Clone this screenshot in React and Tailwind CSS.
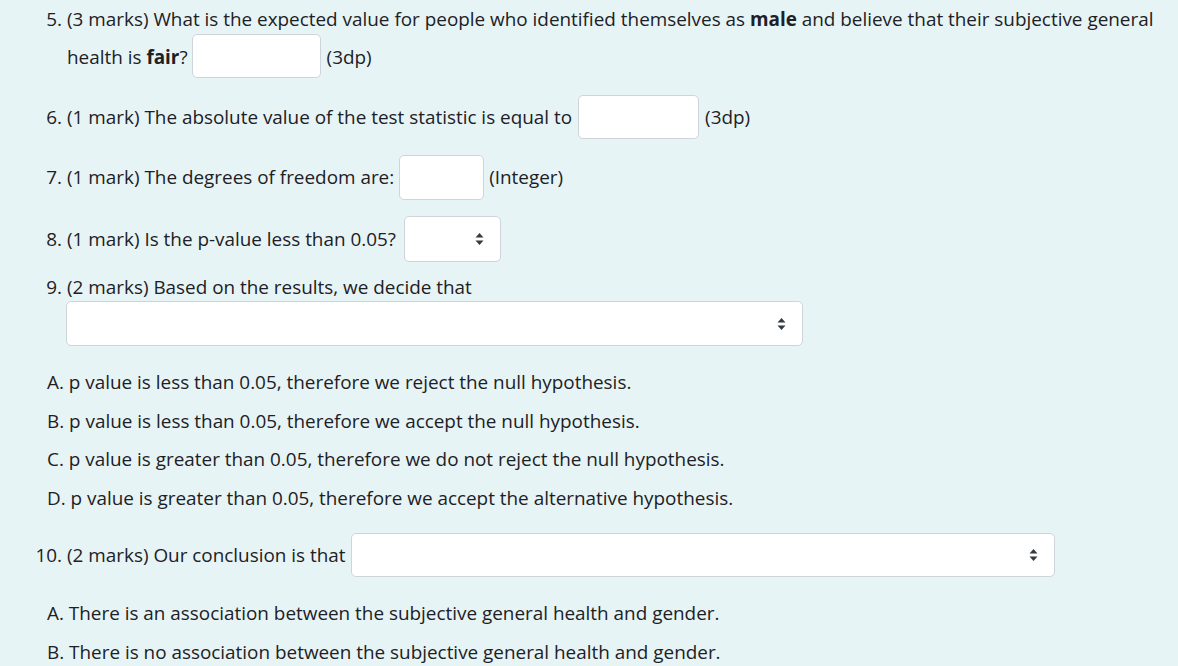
import React from "react";

function Arrows() {
  return (
    <svg width="9" height="14" viewBox="0 0 9 14" className="shrink-0">
      <path d="M4.5 1 L8.5 5.5 L0.5 5.5 Z" fill="#343a40" />
      <path d="M4.5 13 L8.5 8.5 L0.5 8.5 Z" fill="#343a40" />
    </svg>
  );
}

function Box({ className }) {
  return (
    <div
      className={`bg-white border border-[#ced4da] rounded-[5px] shrink-0 ${className}`}
    />
  );
}

function Select({ className }) {
  return (
    <div
      className={`bg-white border border-[#ced4da] rounded-[5px] shrink-0 flex items-center justify-end pr-[16px] ${className}`}
    >
      <Arrows />
    </div>
  );
}

function Num({ children }) {
  return (
    <span className="w-[35px] shrink-0 text-right pr-[5px]">{children}</span>
  );
}

function Option({ children }) {
  return <div className="h-[38.5px] flex items-center pl-[47px]">{children}</div>;
}

export default function App() {
  return (
    <div
      className="w-[1178px] h-[666px] overflow-hidden bg-[#e7f4f6] text-[#1d2125] text-[18.9px] pl-[32px]"
      style={{ fontFamily: '"Open Sans", "Noto Sans", sans-serif' }}
    >
      {/* question 5 */}
      <div className="pt-[5px]">
        <div className="h-[28px] flex items-center whitespace-nowrap">
          <Num>5.</Num>
          <span>
            (3 marks) What is the expected value for people who identified
            themselves as <b>male</b> and believe that their subjective general
          </span>
        </div>
        <div className="h-[44px] mt-[1px] flex items-center pl-[35px]">
          <span className="pt-[3px]">
            health is <b>fair</b>?
          </span>
          <Box className="w-[129px] h-[44px] ml-[4px]" />
          <span className="ml-[6px] pt-[3px]">(3dp)</span>
        </div>
      </div>

      {/* question 6 */}
      <div className="h-[44px] mt-[17px] flex items-center whitespace-nowrap">
        <Num>6.</Num>
        <span>(1 mark) The absolute value of the test statistic is equal to</span>
        <Box className="w-[121px] h-[44px] ml-[6px]" />
        <span className="ml-[6px]">(3dp)</span>
      </div>

      {/* question 7 */}
      <div className="h-[45px] mt-[16px] flex items-center whitespace-nowrap">
        <Num>7.</Num>
        <span>(1 mark) The degrees of freedom are:</span>
        <Box className="w-[85px] h-[45px] ml-[5px]" />
        <span className="ml-[5px]">(Integer)</span>
      </div>

      {/* question 8 */}
      <div className="h-[46px] mt-[16px] flex items-center whitespace-nowrap">
        <Num>8.</Num>
        <span>(1 mark) Is the p-value less than 0.05?</span>
        <Select className="w-[97px] h-[46px] ml-[8px]" />
      </div>

      {/* question 9 */}
      <div className="h-[26px] mt-[12px] flex items-center whitespace-nowrap">
        <Num>9.</Num>
        <span>(2 marks) Based on the results, we decide that</span>
      </div>
      <div className="mt-[1px] pl-[34px]">
        <Select className="w-[737px] h-[45px]" />
      </div>

      <div className="mt-[17px] -ml-[32px] whitespace-nowrap">
        <Option>A. p value is less than 0.05, therefore we reject the null hypothesis.</Option>
        <Option>B. p value is less than 0.05, therefore we accept the null hypothesis.</Option>
        <Option>C. p value is greater than 0.05, therefore we do not reject the null hypothesis.</Option>
        <Option>D. p value is greater than 0.05, therefore we accept the alternative hypothesis.</Option>
      </div>

      {/* question 10 */}
      <div className="h-[44px] mt-[16px] flex items-center whitespace-nowrap">
        <Num>10.</Num>
        <span>(2 marks) Our conclusion is that</span>
        <Select className="w-[704px] h-[44px] ml-[5px]" />
      </div>

      <div className="mt-[17px] -ml-[32px] whitespace-nowrap">
        <Option>A. There is an association between the subjective general health and gender.</Option>
        <Option>B. There is no association between the subjective general health and gender.</Option>
      </div>
    </div>
  );
}
